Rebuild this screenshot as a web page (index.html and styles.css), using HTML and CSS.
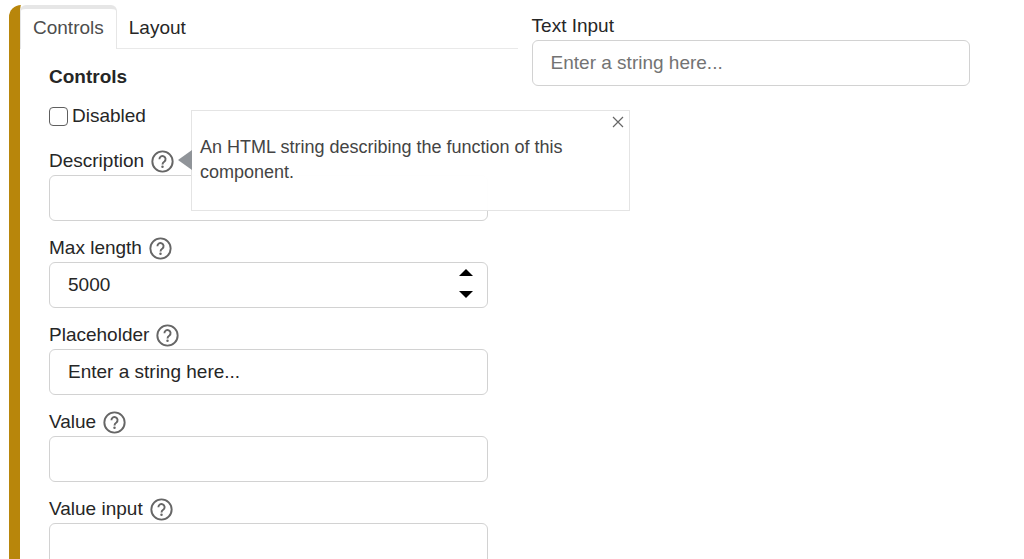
FILE: index.html
```html
<!DOCTYPE html>
<html lang="en">
<head>
<meta charset="utf-8">
<meta name="viewport" content="width=device-width, initial-scale=1">
<title>Text Input settings</title>
<link rel="stylesheet" href="styles.css">
</head>
<body>
<svg class="sprite" aria-hidden="true">
  <symbol id="help" viewBox="0 0 24 24">
    <circle cx="12" cy="12" r="10.6" fill="none" stroke="currentColor" stroke-width="2"/>
    <path d="M8.8 9.6a3.2 3.2 0 1 1 5.2 2.4c-1.2.9-2 1.5-2 3" fill="none" stroke="currentColor" stroke-width="2"/>
    <circle cx="12" cy="17.6" r="1.3" fill="currentColor"/>
  </symbol>
</svg>
<main class="page">
  <section class="panel">
    <div class="tabs" role="tablist">
      <button class="tab tab-active" type="button" role="tab" aria-selected="true">Controls</button>
      <button class="tab" type="button" role="tab" aria-selected="false">Layout</button>
    </div>
    <form class="form">
      <h2 class="heading">Controls</h2>
      <label class="check"><input class="checkbox" type="checkbox">Disabled</label>
      <div class="field">
        <div class="label-row">
          <label for="description">Description</label>
          <span class="help-wrap">
            <button class="help" type="button" aria-label="Help for Description"><svg class="help-icon"><use href="#help"/></svg></button>
            <span class="tooltip" role="tooltip">
              <button class="close" type="button" aria-label="Close"><svg class="close-icon" viewBox="0 0 12 12"><path d="M1 1l10 10M11 1L1 11" fill="none" stroke="currentColor" stroke-width="1.2"/></svg></button>
              An HTML string describing the function of this component.
            </span>
          </span>
        </div>
        <input class="input" id="description" type="text">
      </div>
      <div class="field">
        <div class="label-row">
          <label for="maxlength">Max length</label>
          <button class="help" type="button" aria-label="Help for Max length"><svg class="help-icon"><use href="#help"/></svg></button>
        </div>
        <div class="number">
          <input class="input" id="maxlength" type="text" inputmode="numeric" value="5000">
          <div class="spinner">
            <button class="step" type="button" aria-label="Increase"><svg class="step-icon" viewBox="0 0 14 7"><path d="M7 0l7 7H0z"/></svg></button>
            <button class="step" type="button" aria-label="Decrease"><svg class="step-icon" viewBox="0 0 14 7"><path d="M0 0h14L7 7z"/></svg></button>
          </div>
        </div>
      </div>
      <div class="field">
        <div class="label-row">
          <label for="placeholder">Placeholder</label>
          <button class="help" type="button" aria-label="Help for Placeholder"><svg class="help-icon"><use href="#help"/></svg></button>
        </div>
        <input class="input" id="placeholder" type="text" value="Enter a string here...">
      </div>
      <div class="field">
        <div class="label-row">
          <label for="value">Value</label>
          <button class="help" type="button" aria-label="Help for Value"><svg class="help-icon"><use href="#help"/></svg></button>
        </div>
        <input class="input" id="value" type="text">
      </div>
      <div class="field">
        <div class="label-row">
          <label for="valueinput">Value input</label>
          <button class="help" type="button" aria-label="Help for Value input"><svg class="help-icon"><use href="#help"/></svg></button>
        </div>
        <input class="input" id="valueinput" type="text">
      </div>
    </form>
  </section>
  <section class="preview">
    <label class="preview-label" for="preview">Text Input</label>
    <input class="input" id="preview" type="text" placeholder="Enter a string here...">
  </section>
</main>
</body>
</html>
```
FILE: styles.css
```css
* { box-sizing: border-box; }

body {
  margin: 0;
  height: 100vh;
  overflow: hidden;
  background: #fff;
  color: #262626;
  font-family: "Liberation Sans", Arial, sans-serif;
  font-size: 19px;
  line-height: 24px;
}

button {
  margin: 0;
  padding: 0;
  border: 0;
  background: none;
  color: inherit;
  font: inherit;
}

.sprite { position: absolute; width: 0; height: 0; }

.page {
  display: grid;
  grid-template-columns: 1.16fr 1fr;
  gap: 14px;
  padding: 5px 54px 0 9px;
}

.panel {
  border-left: 11px solid #b8860b;
  border-top-left-radius: 12px;
}

.tabs {
  display: flex;
  height: 44px;
  border-bottom: 1px solid #e9e9e9;
}

.tab { padding: 2px 12px 0; }

.tab-active {
  height: 44px;
  border: solid #e6e6e6;
  border-width: 4px 1px 0 1px;
  border-radius: 6px 6px 0 0;
  background: #fff;
  color: #4d4d4d;
  padding: 0 12px 2px;
}

.form { padding: 16px 30px 0 29px; }

.heading {
  margin: 0 0 15px;
  font-size: 19px;
  line-height: 24px;
}

.check {
  display: flex;
  align-items: center;
  gap: 4px;
  height: 24px;
  margin-bottom: 19px;
}

.checkbox {
  appearance: none;
  width: 19px;
  height: 19px;
  margin: 0;
  border: 1px solid #5f5f5f;
  border-radius: 4px;
  background: #fff;
}

.checkbox:checked { background: #5f5f5f; }

.field { margin-bottom: 13px; }

.label-row {
  display: flex;
  align-items: center;
  gap: 7px;
  height: 28px;
}

.help-wrap { position: relative; display: flex; }

.help { display: flex; color: #666; }

.help-icon { width: 23px; height: 23px; }

.input {
  display: block;
  width: 100%;
  height: 46px;
  padding: 0 18px;
  border: 1px solid #d2d2d2;
  border-radius: 6px;
  background: #fff;
  color: #262626;
  font: inherit;
}

.input::placeholder { color: #737373; opacity: 1; }

.number { position: relative; }

.spinner {
  position: absolute;
  top: 7px;
  right: 15px;
  display: grid;
  gap: 15px;
}

.step { display: flex; color: #000; }

.step-icon { width: 14px; height: 7px; fill: currentColor; }

.tooltip {
  position: absolute;
  z-index: 2;
  top: -40px;
  left: 40px;
  width: 439px;
  padding: 24px 60px 25px 8px;
  border: 1px solid #e4e4e4;
  background: rgba(255, 255, 255, 0.97);
  color: #444;
  font-size: 18px;
  line-height: 25px;
}

.tooltip::before {
  content: "";
  position: absolute;
  top: 39px;
  right: 100%;
  border: solid transparent;
  border-width: 10px 14px 10px 0;
  border-right-color: #909499;
}

.close {
  position: absolute;
  top: 5px;
  right: 5px;
  display: flex;
  color: #666;
}

.close-icon { width: 12px; height: 12px; }

.preview-label { display: block; margin: 9px 0 2px; }
```
